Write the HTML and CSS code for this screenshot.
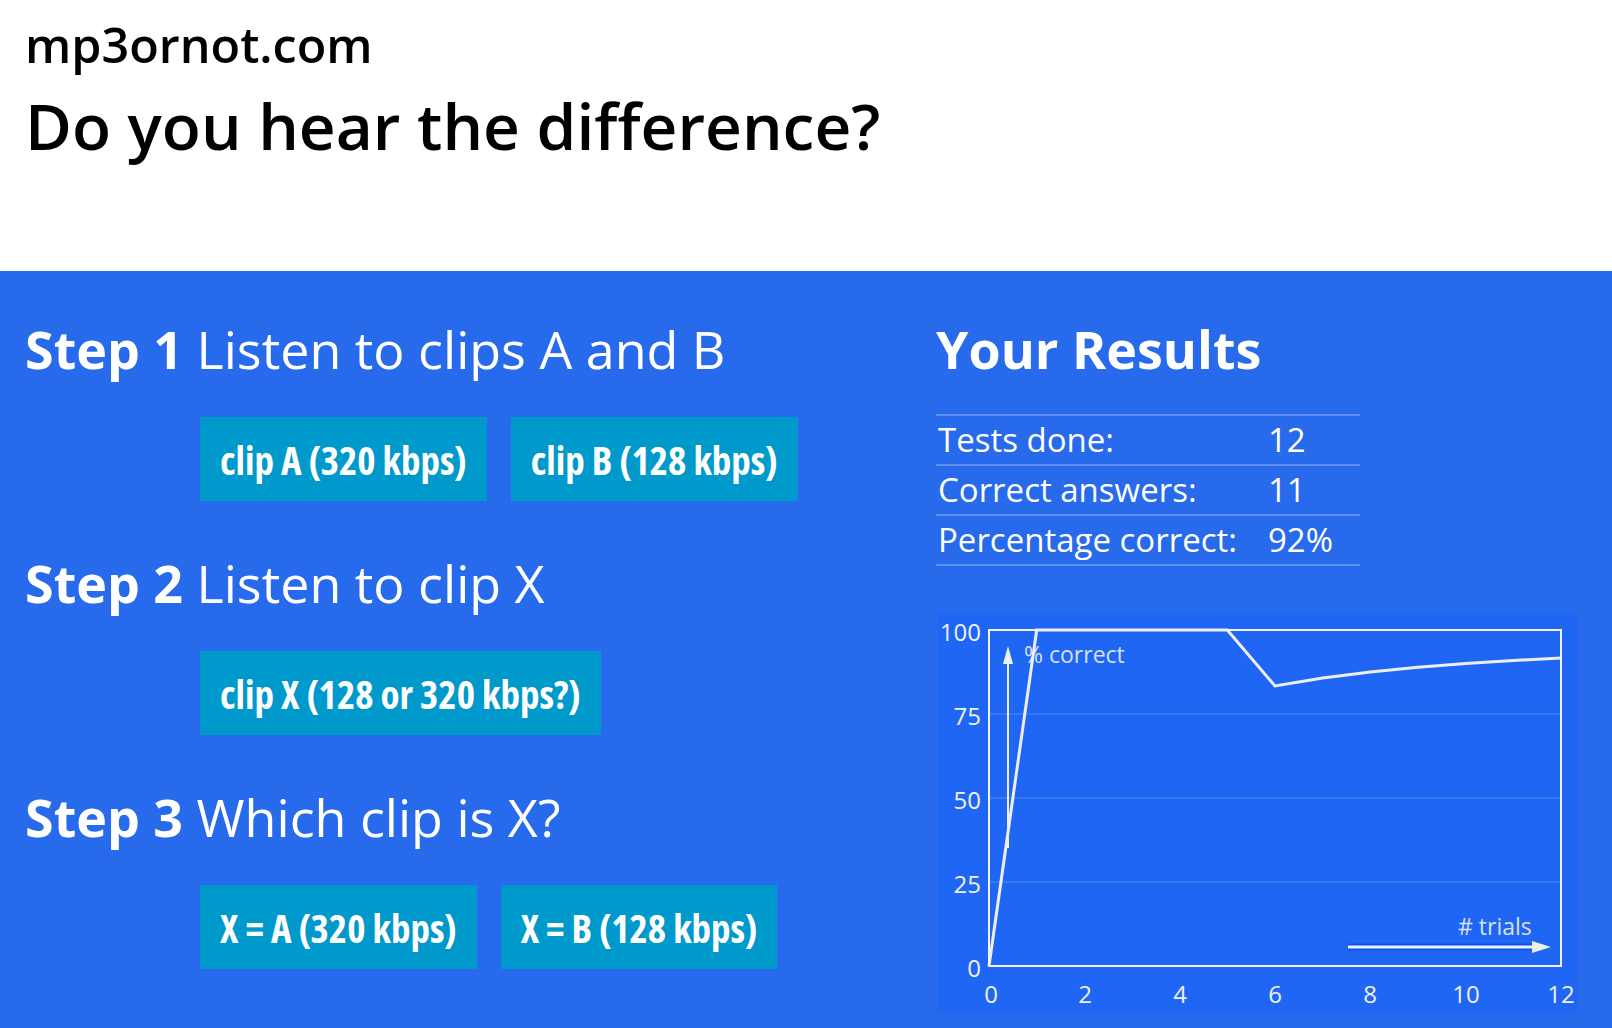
FILE: index.html
```html
<!DOCTYPE html>
<html>
<head>
	<title>mp3ornot.com</title>
	<meta charset="utf-8">
	<link rel="stylesheet" href="styles.css">
</head>
<body>
<header class="top">
	<p class="site">mp3ornot.com</p>
	<h1 class="tagline">Do you hear the difference?</h1>
</header>

<section class="panel">
	<div class="steps">
		<h2 class="step"><b>Step 1</b> Listen to clips A and B</h2>
		<div class="buttons">
			<button class="clip">clip A (320 kbps)</button>
			<button class="clip">clip B (128 kbps)</button>
		</div>

		<h2 class="step"><b>Step 2</b> Listen to clip X</h2>
		<div class="buttons">
			<button class="clip">clip X (128 or 320 kbps?)</button>
		</div>

		<h2 class="step"><b>Step 3</b> Which clip is X?</h2>
		<div class="buttons">
			<button class="clip">X = A (320 kbps)</button>
			<button class="clip">X = B (128 kbps)</button>
		</div>
	</div>

	<div class="results">
		<h2 class="step results-title">Your Results</h2>
		<div class="stats">
			<div class="row"><span>Tests done:</span><span>12</span></div>
			<div class="row"><span>Correct answers:</span><span>11</span></div>
			<div class="row"><span>Percentage correct:</span><span>92%</span></div>
		</div>

		<svg class="chart" width="640" height="400" viewBox="0 0 640 400">
			<rect width="640" height="400" fill="#1f66f5"/>
			<!-- grid -->
			<line x1="52" y1="101" x2="624" y2="101" class="grid"/>
			<line x1="52" y1="185" x2="624" y2="185" class="grid"/>
			<line x1="52" y1="269" x2="624" y2="269" class="grid"/>
			<rect x="52" y="17" width="572" height="336" fill="none" stroke="#f2f2f2" stroke-width="2"/>

			<!-- axis labels -->
			<text x="44" y="28" class="ylab">100</text>
			<text x="44" y="112" class="ylab">75</text>
			<text x="44" y="196" class="ylab">50</text>
			<text x="44" y="280" class="ylab">25</text>
			<text x="44" y="364" class="ylab">0</text>

			<text x="54" y="390" class="xlab">0</text>
			<text x="148" y="390" class="xlab">2</text>
			<text x="243" y="390" class="xlab">4</text>
			<text x="338" y="390" class="xlab">6</text>
			<text x="433" y="390" class="xlab">8</text>
			<text x="529" y="390" class="xlab">10</text>
			<text x="624" y="390" class="xlab">12</text>

			<!-- annotations -->
			<line x1="71" y1="235" x2="71" y2="48" stroke="#eeeeee" stroke-width="2"/>
			<polygon points="66,51 71,33 76,51" fill="#eeeeee"/>
			<text x="87" y="50" class="note">% correct</text>

			<line x1="411" y1="334" x2="598" y2="334" stroke="#0b55e6" stroke-width="7"/>
			<line x1="411" y1="334" x2="598" y2="334" stroke="#eeeeee" stroke-width="3"/>
			<polygon points="595,328 614,334 595,340" fill="#eeeeee"/>
			<text x="521" y="322" class="note"># trials</text>

			<!-- data -->
			<polyline fill="none" stroke="#eeeeee" stroke-width="3"
				points="52,353 99.7,17 147.3,17 195,17 242.7,17 290.3,17 338,73 385.7,65 433.3,59 481,54.3 528.7,50.6 576.3,47.5 624,45"/>
		</svg>
	</div>
</section>
</body>
</html>
```

FILE: styles.css
```css
body {
	margin: 0;
	background-color: #ffffff;
	font-family: "Open Sans", "Noto Sans", sans-serif;
}

.top {
	padding: 16px 25px 106px;
	color: #000000;
}
.site {
	margin: 0;
	font-size: 48.5px;
	line-height: 56px;
	font-weight: 600;
}
.tagline {
	margin: 15px 0 0;
	font-size: 64px;
	line-height: 78px;
	font-weight: 600;
}

.panel {
	display: grid;
	grid-template-columns: 911px 1fr;
	box-sizing: border-box;
	min-height: 757px;
	padding: 47px 0 0 25px;
	background-color: #276aeb;
	color: #ffffff;
}

.step {
	margin: 0 0 37px;
	font-size: 52px;
	line-height: 62px;
	font-weight: 400;
}
.step b {
	font-weight: 700;
}

.buttons {
	display: flex;
	gap: 24px;
	padding-left: 175px;
	margin-bottom: 51px;
}
.clip {
	height: 84px;
	padding: 0 20px;
	border: none;
	background-color: #0099cc;
	color: #ffffff;
	font-family: "Open Sans", sans-serif;
	font-size: 39px;
	font-weight: 700;
	font-stretch: 75%;
	white-space: nowrap;
}

.results-title {
	font-weight: 700;
	margin-bottom: 34px;
}
.stats {
	width: 424px;
	border-top: 2px solid #5f90f0;
	font-size: 33px;
}
.row {
	display: grid;
	grid-template-columns: 330px auto;
	height: 48px;
	padding-left: 2px;
	line-height: 48px;
	border-bottom: 2px solid #5f90f0;
}

.chart {
	display: block;
	margin: 47px 0 0 1px;
	font-family: "Open Sans", sans-serif;
}
.grid {
	stroke: #5089f2;
	stroke-width: 1;
}
.ylab {
	text-anchor: end;
	font-size: 24px;
	fill: #f0f0f0;
}
.xlab {
	text-anchor: middle;
	font-size: 24px;
	fill: #f0f0f0;
}
.note {
	font-size: 23px;
	fill: #d6e0f5;
}
```
